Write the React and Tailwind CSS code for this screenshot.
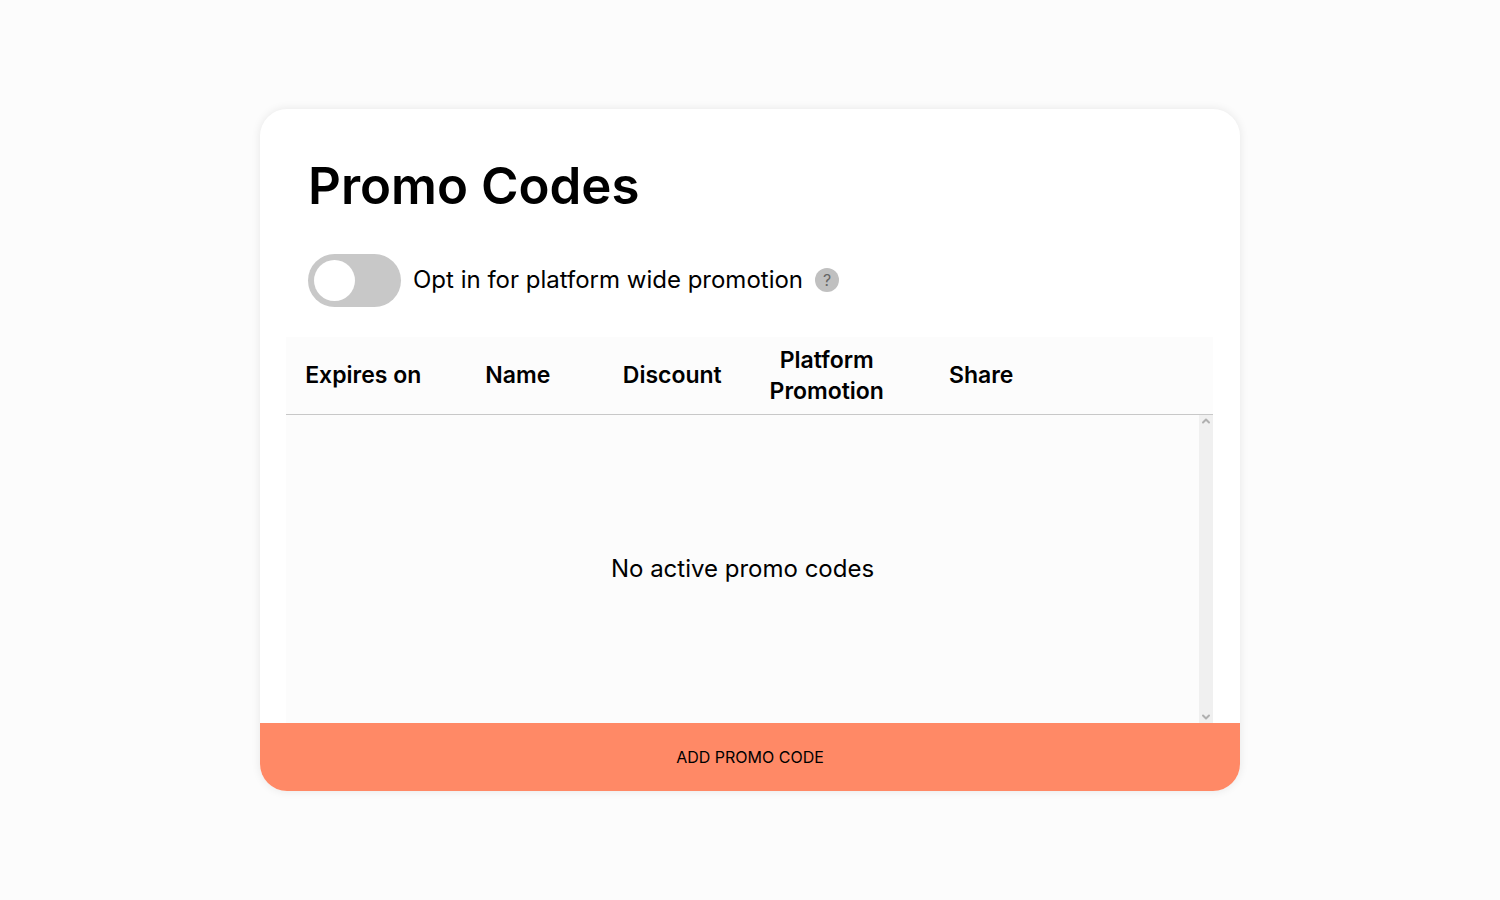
import { useState } from 'react'
import { ChevronUp, ChevronDown } from 'lucide-react'

const COLUMNS = ['Expires on', 'Name', 'Discount', 'Platform Promotion', 'Share', '']

function OptInToggle({ checked, onChange }) {
  return (
    <div className="flex items-center gap-3 px-12">
      <input
        id="opt-in"
        type="checkbox"
        role="switch"
        checked={checked}
        onChange={(e) => onChange(e.target.checked)}
        className="h-[53px] w-[93px] shrink-0 cursor-pointer appearance-none rounded-full bg-[#c8c8c8] p-[6px] transition-colors before:block before:size-[41px] before:rounded-full before:bg-white before:transition-transform before:content-[''] checked:bg-[#ff8966] checked:before:translate-x-10"
      />
      <label htmlFor="opt-in" className="cursor-pointer text-2xl">
        Opt in for platform wide promotion
      </label>
      <button
        type="button"
        className="flex size-6 shrink-0 items-center justify-center rounded-full bg-[#c0c0c0] text-base leading-none text-[#666666]"
      >
        ?
      </button>
    </div>
  )
}

function ScrollRail() {
  return (
    <div className="flex w-[14px] shrink-0 flex-col items-center justify-between bg-[#f0f0f0] text-[#b0b0b0]">
      <ChevronUp size={12} strokeWidth={4} />
      <ChevronDown size={12} strokeWidth={4} />
    </div>
  )
}

export default function App() {
  const [optIn, setOptIn] = useState(false)

  return (
    <main className="flex min-h-screen items-center justify-center bg-[#fcfcfc] px-6 py-10 font-['Inter',sans-serif] text-black">
      <section className="w-full max-w-[980px] overflow-hidden rounded-[27px] bg-white pt-[45px] shadow-[0_0_10px_rgba(0,0,0,0.09)]">
        <h1 className="px-12 text-[51px] leading-[64px] font-semibold">Promo Codes</h1>

        <div className="mt-9 mb-[30px]">
          <OptInToggle checked={optIn} onChange={setOptIn} />
        </div>

        <div className="pr-[27px] pl-[26px]">
          <table className="w-full table-fixed bg-[#fcfcfc]">
            <thead>
              <tr className="h-[78px] border-b border-[#c8c8c8]">
                {COLUMNS.map((col, i) => (
                  <th key={i} className="px-2 text-[23px] leading-[31px] font-semibold">
                    {col}
                  </th>
                ))}
              </tr>
            </thead>
            <tbody>
              <tr>
                <td colSpan={COLUMNS.length} className="p-0">
                  <div className="flex h-[308px]">
                    <p className="flex flex-1 items-center justify-center text-2xl">No active promo codes</p>
                    <ScrollRail />
                  </div>
                </td>
              </tr>
            </tbody>
          </table>
        </div>

        <button type="button" className="h-[68px] w-full cursor-pointer bg-[#ff8966] text-base">
          ADD PROMO CODE
        </button>
      </section>
    </main>
  )
}
